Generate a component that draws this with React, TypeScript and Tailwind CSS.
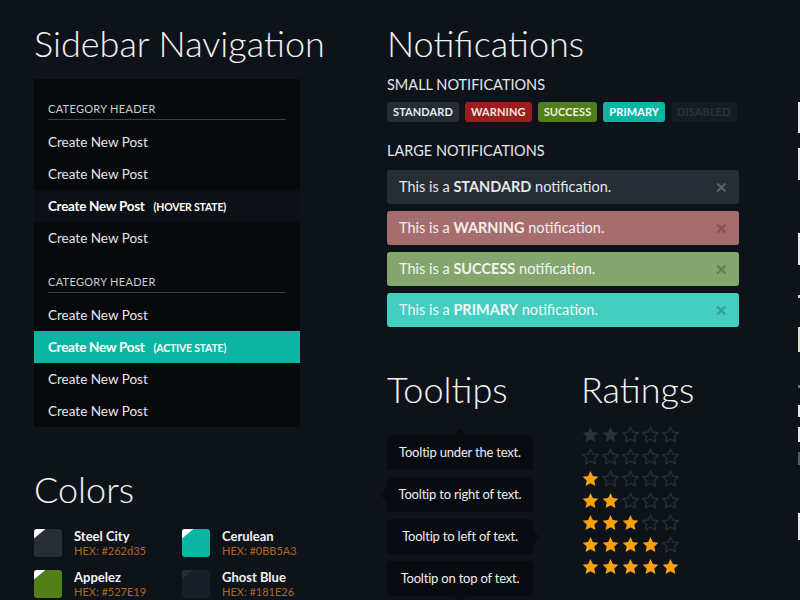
import React from 'react';

type NavItem = { label: string; state?: 'hover' | 'active' };

const groups: NavItem[][] = [
  [{ label: 'Create New Post' }, { label: 'Create New Post' }, { label: 'Create New Post', state: 'hover' }, { label: 'Create New Post' }],
  [{ label: 'Create New Post' }, { label: 'Create New Post', state: 'active' }, { label: 'Create New Post' }, { label: 'Create New Post' }],
];

const badges = [
  { label: 'STANDARD', cls: 'bg-[#262d35] text-[#e9ebee]' },
  { label: 'WARNING', cls: 'bg-[#9b1d1d] text-[#f3e6e6]' },
  { label: 'SUCCESS', cls: 'bg-[#527e19] text-[#eef3e6]' },
  { label: 'PRIMARY', cls: 'bg-[#0bb5a3] text-white' },
  { label: 'DISABLED', cls: 'bg-[#161b22] text-[#2b323b]' },
];

const notices = [
  { word: 'STANDARD', cls: 'bg-[#262d35] text-[#e6e8ea]', x: 'text-[#5c636b]' },
  { word: 'WARNING', cls: 'bg-[#a56d6d] text-[#f6eeee]', x: 'text-[#845353]' },
  { word: 'SUCCESS', cls: 'bg-[#84a56d] text-[#f3f6f0]', x: 'text-[#657f53]' },
  { word: 'PRIMARY', cls: 'bg-[#45cdc0] text-[#f0fbfa]', x: 'text-[#36a198]' },
];

const swatches = [
  { name: 'Steel City', hex: '#262d35', bg: 'bg-[#262d35]', tri: 'bg-white' },
  { name: 'Cerulean', hex: '#0BB5A3', bg: 'bg-[#0bb5a3]', tri: 'bg-white' },
  { name: 'Appelez', hex: '#527E19', bg: 'bg-[#527e19]', tri: 'bg-white' },
  { name: 'Ghost Blue', hex: '#181E26', bg: 'bg-[#181e26]', tri: 'bg-[#262c35]' },
];

const ratings = [
  { filled: 0, dark: 2 },
  { filled: 0, dark: 0 },
  { filled: 1, dark: 0 },
  { filled: 2, dark: 0 },
  { filled: 3, dark: 0 },
  { filled: 4, dark: 0 },
  { filled: 5, dark: 0 },
];

const STAR = 'M12 1.5l3.1 6.7 7.3.8-5.4 5 1.45 7.2L12 17.6l-6.45 3.6L7 14l-5.4-5 7.3-.8z';

function Star({ kind }: { kind: 'gold' | 'dark' | 'empty' }) {
  if (kind === 'empty') {
    return (
      <svg width="17" height="17" viewBox="0.8 0.6 22.4 21.6">
        <path d={STAR} fill="none" stroke="#262d35" strokeWidth="2" strokeLinejoin="round" />
      </svg>
    );
  }
  return (
    <svg width="17" height="17" viewBox="0.8 0.6 22.4 21.6">
      <path d={STAR} fill={kind === 'gold' ? '#f9a20e' : '#2a313a'} />
    </svg>
  );
}

function Heading({ children }: { children: React.ReactNode }) {
  return <h1 className="whitespace-nowrap text-[36px] font-light leading-[48px] text-[#f2f3f4]">{children}</h1>;
}

function Sidebar() {
  return (
    <div className="mt-[13px] bg-[#07090d] pt-[22px]">
      {groups.map((items, gi) => (
        <div key={gi} className={gi > 0 ? 'mt-[20px]' : ''}>
          <div className="mx-[14px] border-b border-[#3a3f46] pb-[2px] text-[11px] leading-[16px] tracking-[0.3px] text-[#c9ccd0]">
            CATEGORY HEADER
          </div>
          <div className="mt-[6px]">
            {items.map((it, i) => (
              <div
                key={i}
                className={
                  'flex h-[32px] items-center px-[14px] text-[13.5px] ' +
                  (it.state === 'active'
                    ? 'bg-[#0bb5a3] text-white'
                    : it.state === 'hover'
                    ? 'bg-[#0c1016] text-white'
                    : 'text-[#e6e7e9]')
                }
              >
                <span>
                  <span className={it.state ? 'font-bold tracking-[-0.3px]' : ''}>{it.label}</span>
                  {it.state && (
                    <span className="ml-[9px] text-[10.5px] font-bold tracking-[-0.2px]">
                      ({it.state === 'active' ? 'ACTIVE' : 'HOVER'} STATE)
                    </span>
                  )}
                </span>
              </div>
            ))}
          </div>
        </div>
      ))}
    </div>
  );
}

function Colors() {
  return (
    <div className="mt-[15px] grid grid-cols-[148px_1fr] gap-y-[12px]">
      {swatches.map((s) => (
        <div key={s.name} className="flex items-center">
          <div className={'relative h-[28px] w-[28px] shrink-0 overflow-hidden rounded-[3px] ' + s.bg}>
            <div className={'absolute left-0 top-0 h-[10px] w-[12px] [clip-path:polygon(0_0,100%_0,0_100%)] ' + s.tri} />
          </div>
          <div className="ml-[12px] pt-[1px]">
            <div className="text-[13px] font-bold leading-[15px] text-[#f2f3f4]">{s.name}</div>
            <div className="text-[11px] leading-[13px] text-[#b4661c]">HEX: {s.hex}</div>
          </div>
        </div>
      ))}
    </div>
  );
}

function Notifications() {
  return (
    <>
      <div className="mt-[11px] text-[14.5px] leading-[16px] text-[#e4e6e8]">SMALL NOTIFICATIONS</div>
      <div className="mt-[9px] flex gap-[6px]">
        {badges.map((b) => (
          <span key={b.label} className={'h-[20px] rounded-[3px] px-[6px] text-[11px] font-bold leading-[20px] tracking-[0.1px] ' + b.cls}>
            {b.label}
          </span>
        ))}
      </div>
      <div className="mt-[21px] text-[14.5px] leading-[16px] text-[#e4e6e8]">LARGE NOTIFICATIONS</div>
      <div className="mt-[11px] flex flex-col gap-[7px]">
        {notices.map((n) => (
          <div key={n.word} className={'flex h-[34px] items-center justify-between rounded-[3px] pl-[12px] pr-[11px] text-[14.5px] ' + n.cls}>
            <span>
              This is a <b className="font-bold">{n.word}</b> notification.
            </span>
            <span className={'text-[15px] font-bold ' + n.x}>✕</span>
          </div>
        ))}
      </div>
    </>
  );
}

function Tooltips() {
  const tips: { text: string; arrow: 'top' | 'left' | 'right' | 'bottom' }[] = [
    { text: 'Tooltip under the text.', arrow: 'top' },
    { text: 'Tooltip to right of text.', arrow: 'left' },
    { text: 'Tooltip to left of text.', arrow: 'right' },
    { text: 'Tooltip on top of text.', arrow: 'bottom' },
  ];
  return (
    <div className="w-[146px] shrink-0">
      <Heading>Tooltips</Heading>
      <div className="mt-[22px] flex flex-col gap-[7px]">
        {tips.map((t) => (
          <div key={t.text} className="relative flex h-[35px] items-center justify-center whitespace-nowrap rounded-[3px] bg-[#080b10] text-[13px] tracking-[-0.2px] text-[#eceef0]">
            {t.arrow === 'top' && (
              <span className="absolute -top-[7px] left-1/2 h-0 w-0 -translate-x-1/2 border-x-[7px] border-b-[7px] border-x-transparent border-b-[#080b10]" />
            )}
            {t.arrow === 'bottom' && (
              <span className="absolute -bottom-[7px] left-1/2 h-0 w-0 -translate-x-1/2 border-x-[7px] border-t-[7px] border-x-transparent border-t-[#080b10]" />
            )}
            {t.arrow === 'left' && (
              <span className="absolute -left-[7px] top-1/2 h-0 w-0 -translate-y-1/2 border-y-[7px] border-r-[7px] border-y-transparent border-r-[#080b10]" />
            )}
            {t.arrow === 'right' && (
              <span className="absolute -right-[7px] top-1/2 h-0 w-0 -translate-y-1/2 border-y-[7px] border-l-[7px] border-y-transparent border-l-[#080b10]" />
            )}
            {t.text}
          </div>
        ))}
      </div>
    </div>
  );
}

function Ratings() {
  return (
    <div className="ml-[48px]">
      <Heading>Ratings</Heading>
      <div className="mt-[13px] flex flex-col gap-[5px] pl-[1px]">
        {ratings.map((r, ri) => (
          <div key={ri} className="flex gap-[3px]">
            {[0, 1, 2, 3, 4].map((i) => (
              <Star key={i} kind={i < r.filled ? 'gold' : i < r.dark ? 'dark' : 'empty'} />
            ))}
          </div>
        ))}
      </div>
    </div>
  );
}

// bits of the next column, cut off by the window edge
const edge = [
  { mt: 102, h: 31, c: 'bg-[#e8eaec]' },
  { mt: 15, h: 32, c: 'bg-[#e8eaec]' },
  { mt: 53, h: 32, c: 'bg-[#e8eaec]' },
  { mt: 30, h: 3, c: 'bg-[#cfd2d6]' },
  { mt: 29, h: 25, c: 'bg-[#d9e2c4]' },
  { mt: 33, h: 3, c: 'bg-[#6b7078]' },
  { mt: 17, h: 12, c: 'bg-[#e8eaec]' },
  { mt: 10, h: 15, c: 'bg-[#e8eaec]' },
  { mt: 10, h: 13, c: 'bg-[#555b63]' },
  { mt: 48, h: 27, c: 'bg-[#e8eaec]' },
];

export default function App() {
  return (
    <div className="h-[600px] w-full overflow-hidden bg-[#0e131a] font-['Lato','Noto_Sans',sans-serif] text-white">
      <div className="flex pl-[34px] pt-[19px]">
        <div className="w-[266px] shrink-0">
          <Heading>Sidebar Navigation</Heading>
          <div className="-mt-[1px]">
            <Sidebar />
          </div>
          <div className="mt-[38px]">
            <Heading>Colors</Heading>
          </div>
          <Colors />
        </div>
        <div className="ml-[87px] w-[352px] shrink-0">
          <Heading>Notifications</Heading>
          <div className="-mt-[1px]">
            <Notifications />
          </div>
          <div className="mt-[38px] flex">
            <Tooltips />
            <Ratings />
          </div>
        </div>
        <div className="-mt-[19px] ml-[59px] w-[2px] shrink-0">
          {edge.map((e, i) => (
            <div key={i} className={e.c} style={{ marginTop: e.mt, height: e.h }} />
          ))}
        </div>
      </div>
    </div>
  );
}
